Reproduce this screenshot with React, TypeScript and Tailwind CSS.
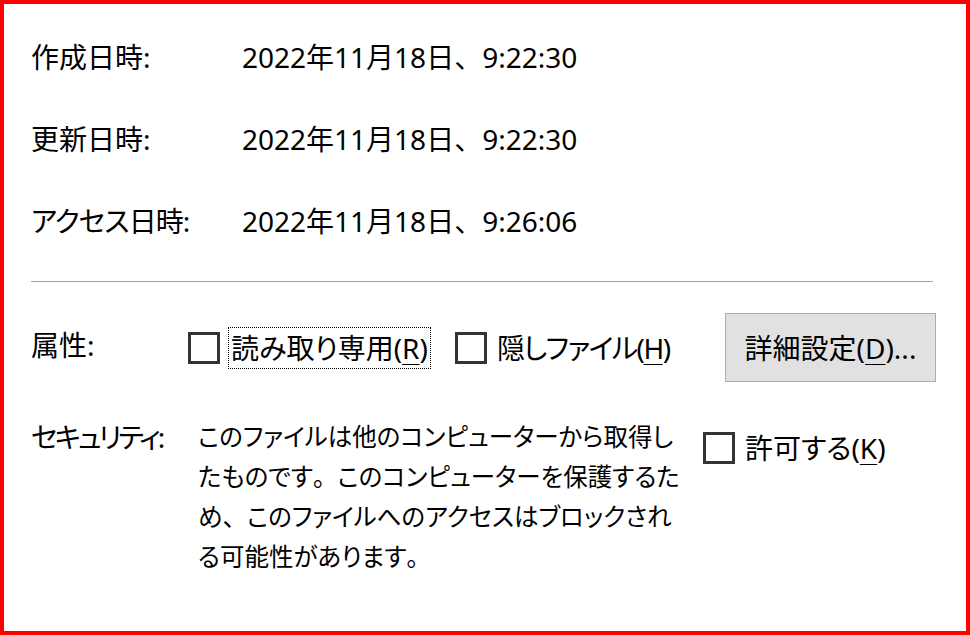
import { type ReactNode } from 'react';

const font = "font-['Noto_Sans','Noto_Sans_CJK_JP',sans-serif] [font-feature-settings:'palt']";

function DateRow({ label, value, tight = false }: { label: string; value: string; tight?: boolean }) {
    return (
        <div className="h-[82px] flex items-center">
            <div className={`w-[211px] shrink-0 whitespace-nowrap ${tight ? 'tracking-[-1px]' : ''}`}>{label}</div>
            <div className="whitespace-nowrap [font-feature-settings:normal]">{value}</div>
        </div>
    );
}

function CheckBox({ className = '' }: { className?: string }) {
    return <span className={`block w-[32px] h-[32px] shrink-0 border-[3px] border-[#333333] bg-white ${className}`} />;
}

function Key({ children }: { children: ReactNode }) {
    return <span className="underline underline-offset-[5px] decoration-1">{children}</span>;
}

// full-width punctuation (no proportional alternates)
function P({ children }: { children: ReactNode }) {
    return <span className="[font-feature-settings:normal]">{children}</span>;
}

export default function App() {
    return (
        <div
            className={`w-[970px] h-[635px] border-4 border-[#ff0000] bg-white text-black text-[28px] leading-[40px] pl-[27px] pr-[33px] pt-[12px] ${font}`}
        >
            <DateRow label="作成日時:" value="2022年11月18日、9:22:30" />
            <DateRow label="更新日時:" value="2022年11月18日、9:22:30" />
            <DateRow label="アクセス日時:" value="2022年11月18日、9:26:06" tight />

            <div className="mt-[19px] h-px bg-[#a0a0a0]" />

            {/* Attributes */}
            <div className="mt-[31px] h-[69px] flex items-center">
                <div className="w-[157px] shrink-0 -mt-[6px]">属性:</div>
                <CheckBox />
                <span className="ml-[8px] border border-dotted border-black px-[2px] whitespace-nowrap">
                    読み取り専用(<Key>R</Key>)
                </span>
                <CheckBox className="ml-[24px]" />
                <span className="ml-[10px] whitespace-nowrap tracking-[-1.5px]">
                    隠しファイル(<Key>H</Key>)
                </span>
                <button className="ml-auto -mr-[3px] w-[211px] h-[69px] bg-[#e1e1e1] border border-[#adadad] whitespace-nowrap">
                    詳細設定(<Key>D</Key>)...
                </button>
            </div>

            {/* Security */}
            <div className="mt-[35px] flex items-start">
                <div className="w-[167px] shrink-0 whitespace-nowrap tracking-[-3px]">セキュリティ:</div>
                <p className="w-[505px] shrink-0 whitespace-nowrap text-[24.5px]">
                    このファイルは他のコンピューターから取得し
                    <br />
                    たものです<P>。</P>このコンピューターを保護するた
                    <br />
                    め<P>、</P>このファイルへのアクセスはブロックされ
                    <br />
                    る可能性があります<P>。</P>
                </p>
                <div className="mt-[11px] flex items-center">
                    <CheckBox />
                    <span className="ml-[10px] whitespace-nowrap">
                        許可する(<Key>K</Key>)
                    </span>
                </div>
            </div>
        </div>
    );
}
